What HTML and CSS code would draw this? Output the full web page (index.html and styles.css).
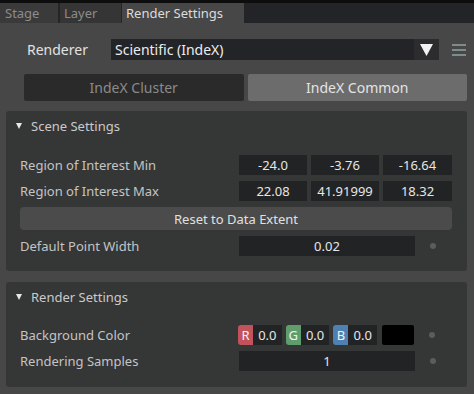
FILE: index.html
```html
<!DOCTYPE html>
<html>
<head>
<meta charset="utf-8">
<link rel="stylesheet" href="styles.css">
</head>
<body>
<div class="tabs">
  <div class="tab tab-stage">Stage</div>
  <div class="tab tab-layer">Layer</div>
  <div class="tab tab-active">Render Settings</div>
</div>
<div class="renderer-row">
  <div class="renderer-label">Renderer</div>
  <div class="combo">
    <span class="combo-text">Scientific (IndeX)</span>
    <span class="combo-arrow"><svg width="13" height="12" viewBox="0 0 13 12"><polygon points="0,0 13,0 6.5,12" fill="#f2f2f2"/></svg></span>
  </div>
  <div class="menu-icon"><span></span><span></span><span></span></div>
</div>
<div class="mode-row">
  <div class="mode-btn mode-off">IndeX Cluster</div>
  <div class="mode-btn mode-on">IndeX Common</div>
</div>
<div class="panel panel-scene">
  <div class="panel-header"><span class="tri"></span>Scene Settings</div>
  <div class="panel-body">
    <div class="row">
      <div class="label">Region of Interest Min</div>
      <div class="triple">
        <div class="field">-24.0</div>
        <div class="field">-3.76</div>
        <div class="field">-16.64</div>
      </div>
    </div>
    <div class="row">
      <div class="label">Region of Interest Max</div>
      <div class="triple">
        <div class="field">22.08</div>
        <div class="field">41.91999</div>
        <div class="field">18.32</div>
      </div>
    </div>
    <div class="reset-btn">Reset to Data Extent</div>
    <div class="row">
      <div class="label">Default Point Width</div>
      <div class="single">
        <div class="field wide">0.02</div>
        <span class="dot"></span>
      </div>
    </div>
  </div>
</div>
<div class="panel panel-render">
  <div class="panel-header"><span class="tri"></span>Render Settings</div>
  <div class="panel-body">
    <div class="row">
      <div class="label">Background Color</div>
      <div class="single">
        <div class="color-fields">
          <span class="badge badge-r">R</span><span class="cval">0.0</span>
          <span class="badge badge-g">G</span><span class="cval">0.0</span>
          <span class="badge badge-b">B</span><span class="cval">0.0</span>
          <span class="swatch"></span>
        </div>
        <span class="dot"></span>
      </div>
    </div>
    <div class="row">
      <div class="label">Rendering Samples</div>
      <div class="single">
        <div class="field wide">1</div>
        <span class="dot"></span>
      </div>
    </div>
  </div>
</div>
</body>
</html>
```
FILE: styles.css
```css
* { box-sizing: border-box; }
html, body {
  margin: 0;
  padding: 0;
}
body {
  width: 474px;
  height: 394px;
  overflow: hidden;
  background: #474747;
  font-family: "Noto Sans", "Open Sans", sans-serif;
  color: #c8c8c8;
}
.tabs {
  display: flex;
  height: 23px;
  background: #232428;
  border-top: 3px solid #0d0d0e;
}
.tab {
  height: 20px;
  display: flex;
  align-items: center;
  font-size: 13px;
  padding-left: 5px;
}
.tab-stage {
  width: 59px;
  background: #3a3a3a;
  color: #8c8c8c;
  border-right: 1px solid #262626;
}
.tab-layer {
  width: 62px;
  background: #353535;
  color: #8c8c8c;
  border-right: 1px solid #262626;
  margin-left: 1px;
  padding-left: 4px;
}
.tab-active {
  width: 122px;
  background: #474747;
  color: #dcdcdc;
  padding-left: 4px;
}
.renderer-row {
  display: flex;
  align-items: center;
  margin-top: 16px;
  height: 21px;
  padding-left: 27px;
}
.renderer-label {
  width: 84px;
  font-size: 14px;
  color: #e2e2e2;
}
.combo {
  width: 328px;
  height: 21px;
  background: #232427;
  display: flex;
  align-items: center;
  justify-content: space-between;
}
.combo-text {
  padding-left: 4px;
  font-size: 14px;
  color: #ececec;
}
.combo-arrow {
  width: 25px;
  height: 21px;
  background: #2c2c2e;
  display: flex;
  align-items: center;
  justify-content: center;
}
.combo-arrow svg { display: block; }
.menu-icon {
  margin-left: 13px;
  width: 14px;
  display: flex;
  flex-direction: column;
  gap: 3px;
}
.menu-icon span {
  display: block;
  height: 2px;
  background: #7d8c8a;
}
.mode-row {
  display: flex;
  gap: 4px;
  margin: 14px 7px 0 24px;
  height: 27px;
}
.mode-btn {
  flex: 1;
  display: flex;
  align-items: center;
  justify-content: center;
  font-size: 14px;
  border-radius: 2px;
}
.mode-off {
  background: #2a2a2a;
  color: #8a8a8a;
}
.mode-on {
  background: #6c6c6c;
  color: #e4e4e4;
}
.panel {
  margin: 10px 7px 0 6px;
  background: #353636;
  border-radius: 3px;
}
.panel-render { margin-top: 11px; }
.panel-header {
  height: 30px;
  display: flex;
  align-items: center;
  padding-left: 10px;
  font-size: 13px;
  color: #cacaca;
}
.panel-render .panel-header { height: 29px; }
.tri {
  width: 0;
  height: 0;
  border-left: 3.5px solid transparent;
  border-right: 3.5px solid transparent;
  border-top: 6px solid #e8e8e8;
  margin-right: 9px;
}
.panel-body {
  padding: 14px 15px 15px 14px;
  display: flex;
  flex-direction: column;
  gap: 6px;
}
.panel-render .panel-body { padding-bottom: 16px; }
.row {
  display: flex;
  align-items: center;
  height: 20px;
}
.label {
  width: 219px;
  font-size: 13px;
  color: #c4c4c4;
}
.triple {
  flex: 1;
  display: grid;
  grid-template-columns: 68px 68px 69px;
  gap: 4px;
  height: 20px;
}
.field {
  background: #222325;
  height: 20px;
  display: flex;
  align-items: center;
  justify-content: center;
  font-size: 13px;
  color: #e6e6e6;
}
.single {
  flex: 1;
  display: flex;
  align-items: center;
  height: 20px;
}
.wide { width: 176px; }
.dot {
  width: 6px;
  height: 6px;
  border-radius: 50%;
  background: #5c5c5c;
  margin-left: 15px;
}
.reset-btn {
  height: 23px;
  background: #4b4b4b;
  border-radius: 4px;
  display: flex;
  align-items: center;
  justify-content: center;
  font-size: 13px;
  color: #e0e0e0;
}
.color-fields {
  width: 176px;
  display: flex;
  align-items: center;
  height: 20px;
  margin-left: -1px;
}
.badge {
  width: 15px;
  height: 20px;
  border-radius: 3px 0 0 3px;
  display: flex;
  align-items: center;
  justify-content: center;
  font-size: 13px;
  color: #f2f2f2;
}
.badge-r { background: #c2525c; }
.badge-g { background: #5f9e6c; }
.badge-b { background: #4e80b3; }
.cval {
  width: 29px;
  height: 20px;
  background: #222325;
  display: flex;
  align-items: center;
  justify-content: center;
  font-size: 13px;
  color: #e6e6e6;
  margin-right: 4px;
}
.swatch {
  width: 32px;
  height: 20px;
  background: #000;
  border-radius: 2px;
  margin-left: 1px;
}
```
